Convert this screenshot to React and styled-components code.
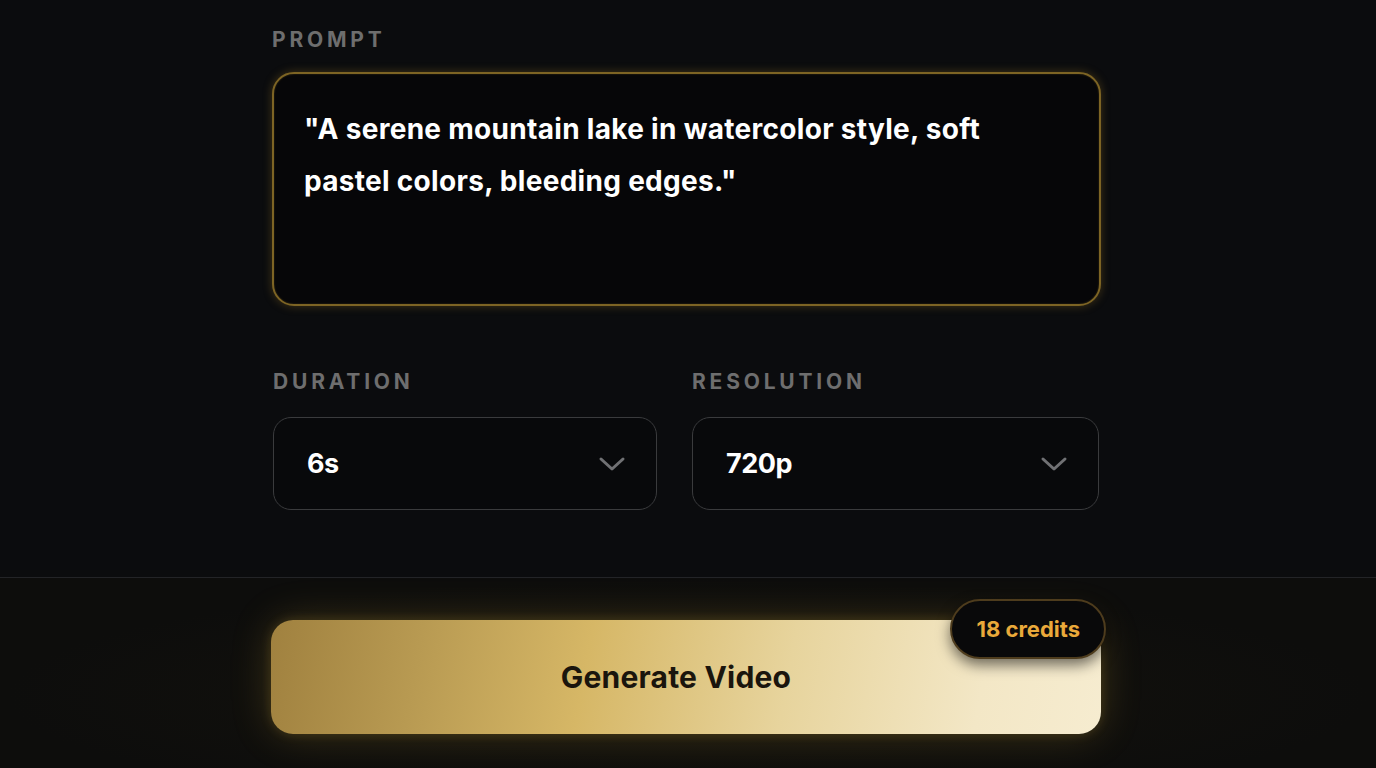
import React from "react";
import styled, { createGlobalStyle } from "styled-components";

const Global = createGlobalStyle`
  html, body { margin: 0; padding: 0; background: #0b0c0e; }
  body { font-family: "Inter", "Lato", "Liberation Sans", sans-serif; }
  * { box-sizing: border-box; }
`;

const Page = styled.div`
  min-height: 100vh;
  background: #0b0c0e;
  display: flex;
  flex-direction: column;
`;

const Column = styled.div`
  width: 830px;
  margin: 0 auto;
  position: relative;
  left: -2px;
  display: flex;
  flex-direction: column;
`;

const Top = styled(Column)`
  padding-top: 27px;
  padding-bottom: 67px;
  gap: 63px;
`;

const Field = styled.div`
  display: flex;
  flex-direction: column;
  gap: ${(p) => p.$gap || 22}px;
  padding-left: ${(p) => p.$inset || 0}px;
`;

const Label = styled.div`
  font-size: 21px;
  font-weight: 700;
  letter-spacing: 3.8px;
  color: #6e6e6e;
  text-transform: uppercase;
  line-height: 26px;
`;

const PromptBox = styled.div`
  height: 234px;
  border-radius: 22px;
  border: 2px solid #7d6424;
  background: #060608;
  box-shadow: 0 0 10px rgba(170, 130, 40, 0.35), inset 0 0 2px rgba(200, 160, 60, 0.3);
  padding: 29px 30px;
  color: #ffffff;
  font-size: 28px;
  font-weight: 700;
  line-height: 52px;
  letter-spacing: 0.3px;
`;

const Row = styled.div`
  display: grid;
  grid-template-columns: 386px 1fr;
  gap: 35px;
`;

const Select = styled.div`
  height: 93px;
  border-radius: 18px;
  border: 1px solid #3a3b3d;
  background: #08090b;
  display: flex;
  align-items: center;
  justify-content: space-between;
  padding: 0 30px 0 33px;
  color: #ffffff;
  font-size: 27px;
  font-weight: 700;
  letter-spacing: -0.5px;
  margin-right: ${(p) => p.$mr || 0}px;
`;

const Divider = styled.div`
  height: 1px;
  background: #232427;
`;

const Footer = styled.div`
  background: radial-gradient(ellipse at 50% 60%, #15130d 0%, #0d0d0c 70%);
  padding: 42px 0 40px;
  flex: 1;
`;

const ButtonWrap = styled.div`
  position: relative;
`;

const GenerateButton = styled.button`
  width: 830px;
  height: 114px;
  border: none;
  border-radius: 22px;
  background: linear-gradient(100deg, #a0813f 0%, #b89a52 18%, #d6b766 38%, #e7d49d 62%, #f3e7c6 85%, #f6ecd0 100%);
  box-shadow: 0 0 40px rgba(210, 170, 60, 0.22), 0 0 12px rgba(210, 170, 60, 0.2);
  color: #1a150d;
  font-family: "Inter", "Lato", sans-serif;
  font-size: 30px;
  font-weight: 700;
  letter-spacing: 0.2px;
  padding: 0 20px 0 0;
  cursor: pointer;
`;

const Badge = styled.div`
  position: absolute;
  top: -21px;
  right: -5px;
  height: 60px;
  padding: 0 24px;
  border-radius: 30px;
  background: #09090a;
  border: 2px solid #4e3c1d;
  box-shadow: 0 6px 14px rgba(0, 0, 0, 0.55);
  display: flex;
  align-items: center;
  color: #eaa93a;
  font-size: 22px;
  font-weight: 700;
  letter-spacing: 0px;
`;

const Chevron = () => (
  <svg width="28" height="16" viewBox="0 0 28 16" fill="none">
    <path d="M3 3 L14 13 L25 3" stroke="#707174" strokeWidth="3" strokeLinecap="round" strokeLinejoin="round" />
  </svg>
);

export default function App() {
  return (
    <Page>
      <Global />
      <Top>
        <Field $gap={19} $inset={1}>
          <Label>Prompt</Label>
          <PromptBox>
            "A serene mountain lake in watercolor style, soft
            <br />
            pastel colors, bleeding edges."
          </PromptBox>
        </Field>
        <Row>
          <Field $gap={22} $inset={2}>
            <Label>Duration</Label>
            <Select>
              6s
              <Chevron />
            </Select>
          </Field>
          <Field $gap={22}>
            <Label>Resolution</Label>
            <Select $mr={2}>
              720p
              <Chevron />
            </Select>
          </Field>
        </Row>
      </Top>
      <Divider />
      <Footer>
        <Column>
          <ButtonWrap>
            <GenerateButton>Generate Video</GenerateButton>
            <Badge>18 credits</Badge>
          </ButtonWrap>
        </Column>
      </Footer>
    </Page>
  );
}
